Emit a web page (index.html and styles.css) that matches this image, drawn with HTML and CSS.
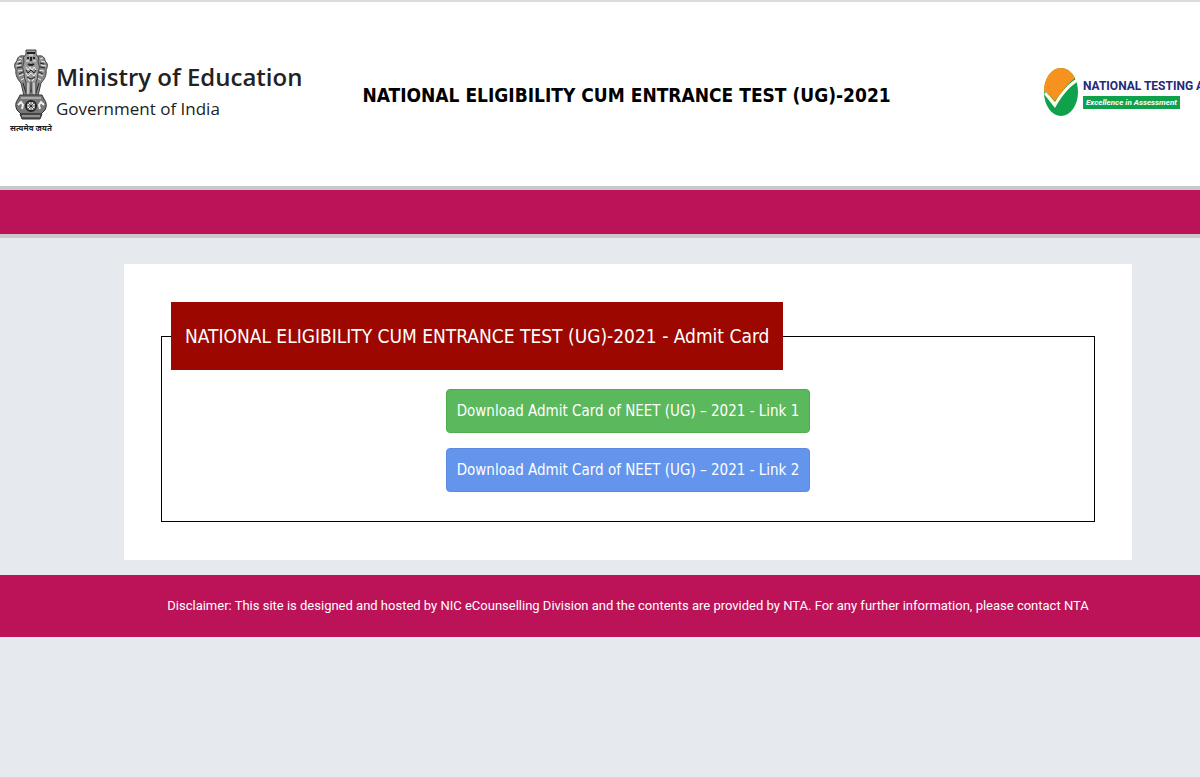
FILE: index.html
```
<!DOCTYPE html>
<html lang="en">
<head>
    <meta charset="UTF-8">
    <meta name="viewport" content="width=device-width, initial-scale=1.0">
    <title>NEET (UG)-2021 - Admit Card</title>
    <link rel="stylesheet" href="styles.css">
</head>
<body>
    <div class="page">
        <header class="header">
            <div class="ministry">
                <div class="emblem">
                    <svg width="34" height="72" viewBox="0 0 34 72" aria-hidden="true">
                        <!-- side lions -->
                        <path d="M10 7 C5 6 3 9 3 12 C0 14 0 18 2 21 C1 26 4 31 7 34 L10 47 H14 L14 20 Z" fill="#888" stroke="#444"/>
                        <path d="M24 7 C29 6 31 9 31 12 C34 14 34 18 32 21 C33 26 30 31 27 34 L24 47 H20 L20 20 Z" fill="#888" stroke="#444"/>
                        <path d="M3 13 L7 12 M2 17 L7 16 M4 22 L9 21 M5 9 L8 10 M5 27 L10 25 M7 31 L11 29 M31 13 L27 12 M32 17 L27 16 M30 22 L25 21 M29 9 L26 10 M29 27 L24 25 M27 31 L23 29" stroke="#eee" fill="none"/>
                        <path d="M4 15 L8 14 M3 19 L8 18 M5 25 L9 23 M30 15 L26 14 M31 19 L26 18 M29 25 L25 23 M9 34 L12 44 M25 34 L22 44" stroke="#222" fill="none"/>
                        <!-- front lion -->
                        <path d="M12 1 H22 L22 5 Q26 8 24 13 Q27 18 24 24 Q24 30 22 33 L22 47 H18 L17 36 L16 47 H12 L12 33 Q10 30 10 24 Q7 18 10 13 Q8 8 12 5 Z" fill="#999" stroke="#444"/>
                        <path d="M13 4 H21 M13 9 H15 M19 9 H21 M17 8 V12 M14 15 Q17 17 20 15" stroke="#222" stroke-width="2" fill="none"/>
                        <path d="M15 6 H19 M12 12 H15 M19 12 H22 M12 18 L14 21 L16 18 L18 21 L20 18 L22 21 M12 24 L14 27 L17 24 L20 27 L22 24 M14 30 L17 33 L20 30 M14 34 V45 M20 34 V45" stroke="#eee" fill="none"/>
                        <path d="M12 21 L14 24 L17 21 L20 24 L22 21 M13 28 L17 30 L21 28 M17 32 V36" stroke="#222" fill="none"/>
                        <!-- abacus with the wheel -->
                        <path d="M6 46 H28 L30 50 Q34 55 31 61 L27 65 H7 L3 61 Q0 55 4 50 Z" fill="#777" stroke="#333"/>
                        <path d="M7 49 H27" stroke="#ddd"/>
                        <circle cx="17" cy="57" r="5" fill="#eee" stroke="#222" stroke-width="2"/>
                        <path d="M17 53 V61 M13 57 H21 M14 54 L20 60 M20 54 L14 60" stroke="#555"/>
                        <circle cx="17" cy="57" r="1" fill="#222"/>
                        <path d="M4 56 L7 53 L9 56 L8 60 M30 56 L27 53 L25 56 L26 60" stroke="#eee" stroke-width="2" fill="none"/>
                        <path d="M6 65 H28 L26 70 H8 Z" fill="#555" stroke="#333"/>
                        <path d="M8 67 H26" stroke="#ccc"/>
                    </svg>
                    <span class="motto" lang="hi">सत्यमेव जयते</span>
                </div>
                <div class="ministry-text">
                    <strong>Ministry of Education</strong>
                    <span>Government of India</span>
                </div>
            </div>
            <h1>NATIONAL ELIGIBILITY CUM ENTRANCE TEST (UG)-2021</h1>
            <div class="nta">
                <svg width="36" height="50" viewBox="0 0 36 50" aria-hidden="true">
                    <ellipse cx="18" cy="25" rx="17" ry="24" fill="#0fa14b"/>
                    <path d="M1 25 C1 11 8 1 18 1 C24 1 29 5 32 11 C24 17 18 26 12 34 L3 25 Z" fill="#f7921e"/>
                    <path d="M1 27 L3 25 L12 35 C18 25 25 17 33 12 L34 15 C25 21 18 30 12 41 Z" fill="#fffde8"/>
                </svg>
                <div class="nta-text">
                    <strong>NATIONAL TESTING AGENCY</strong>
                    <em>Excellence in Assessment</em>
                </div>
            </div>
        </header>

        <nav class="navbar"></nav>

        <main class="card">
            <fieldset class="admit-card">
                <legend>NATIONAL ELIGIBILITY CUM ENTRANCE TEST (UG)-2021 - Admit Card</legend>
                <div class="links">
                    <a class="btn btn-green" href="#">Download Admit Card of NEET (UG) – 2021 - Link 1</a>
                    <a class="btn btn-blue" href="#">Download Admit Card of NEET (UG) – 2021 - Link 2</a>
                </div>
            </fieldset>
        </main>

        <footer class="footer">
            Disclaimer: This site is designed and hosted by NIC eCounselling Division and the contents are provided by NTA. For any further information, please contact NTA
        </footer>
    </div>
</body>
</html>
```
FILE: styles.css
```
* {
    box-sizing: border-box;
}

body {
    margin: 0;
    background-color: #e6eaef;
    font-family: "DejaVu Sans Condensed", Tahoma, "DejaVu Sans", sans-serif;
    overflow-x: hidden;
}

.page {
    min-width: 1256px;
}

.header {
    display: flex;
    align-items: center;
    height: 186px;
    padding: 0 0 4px 10px;
    border-top: 2px solid #dcdcdc;
    background-color: #fff;
}

.ministry {
    display: flex;
    align-items: center;
    gap: 4px;
    font-family: "Open Sans", "Noto Sans", sans-serif;
    color: #222;
}

.emblem {
    display: flex;
    flex-direction: column;
    align-items: center;
    width: 42px;
}

.motto {
    font-size: 8px;
    line-height: 14px;
    font-weight: bold;
    white-space: nowrap;
}

.ministry-text {
    display: flex;
    flex-direction: column;
    white-space: nowrap;
}

.ministry-text strong {
    font-size: 24px;
    line-height: 34px;
    font-weight: 600;
}

.ministry-text span {
    font-size: 17px;
    line-height: 30px;
}

h1 {
    margin: 0 0 0 60px;
    padding-top: 6px;
    font-size: 19px;
    color: #000;
    white-space: nowrap;
}

.nta {
    display: flex;
    align-items: center;
    gap: 4px;
    width: 213px;
    margin-left: auto;
}

.nta-text {
    display: flex;
    flex-direction: column;
    align-items: flex-start;
    font-family: Roboto, Arial, sans-serif;
    white-space: nowrap;
}

.nta-text strong {
    font-size: 12px;
    line-height: 20px;
    color: #23297a;
}

.nta-text em {
    padding: 0 3px;
    background-color: #0fa14b;
    color: #fff;
    font-size: 8px;
    line-height: 13px;
    font-weight: bold;
}

.navbar {
    height: 52px;
    border: solid #cbc8cb;
    border-width: 4px 0;
    background-color: #bc1257;
}

.card {
    margin: 26px 124px 15px;
    padding: 38px 37px;
    background-color: #fff;
}

.admit-card {
    margin: 0;
    padding: 0 9px 29px;
    border: 1px solid #000;
}

legend {
    padding: 0 14px;
    background-color: #9c0800;
    color: #fff;
    font-size: 19px;
    line-height: 68px;
}

.links {
    display: flex;
    flex-direction: column;
    align-items: center;
    gap: 15px;
    padding-top: 19px;
}

.btn {
    padding: 0 10px;
    border: 1px solid #4cae4c;
    border-radius: 4px;
    color: #fff;
    font-size: 15px;
    line-height: 42px;
    text-decoration: none;
}

.btn-green {
    background-color: #5cb85c;
}

.btn-blue {
    background-color: #6495ed;
    border-color: #5c8be0;
}

.footer {
    background-color: #bc1257;
    color: #fff;
    font-family: Roboto, Tahoma, sans-serif;
    font-size: 13px;
    line-height: 62px;
    text-align: center;
}
```
